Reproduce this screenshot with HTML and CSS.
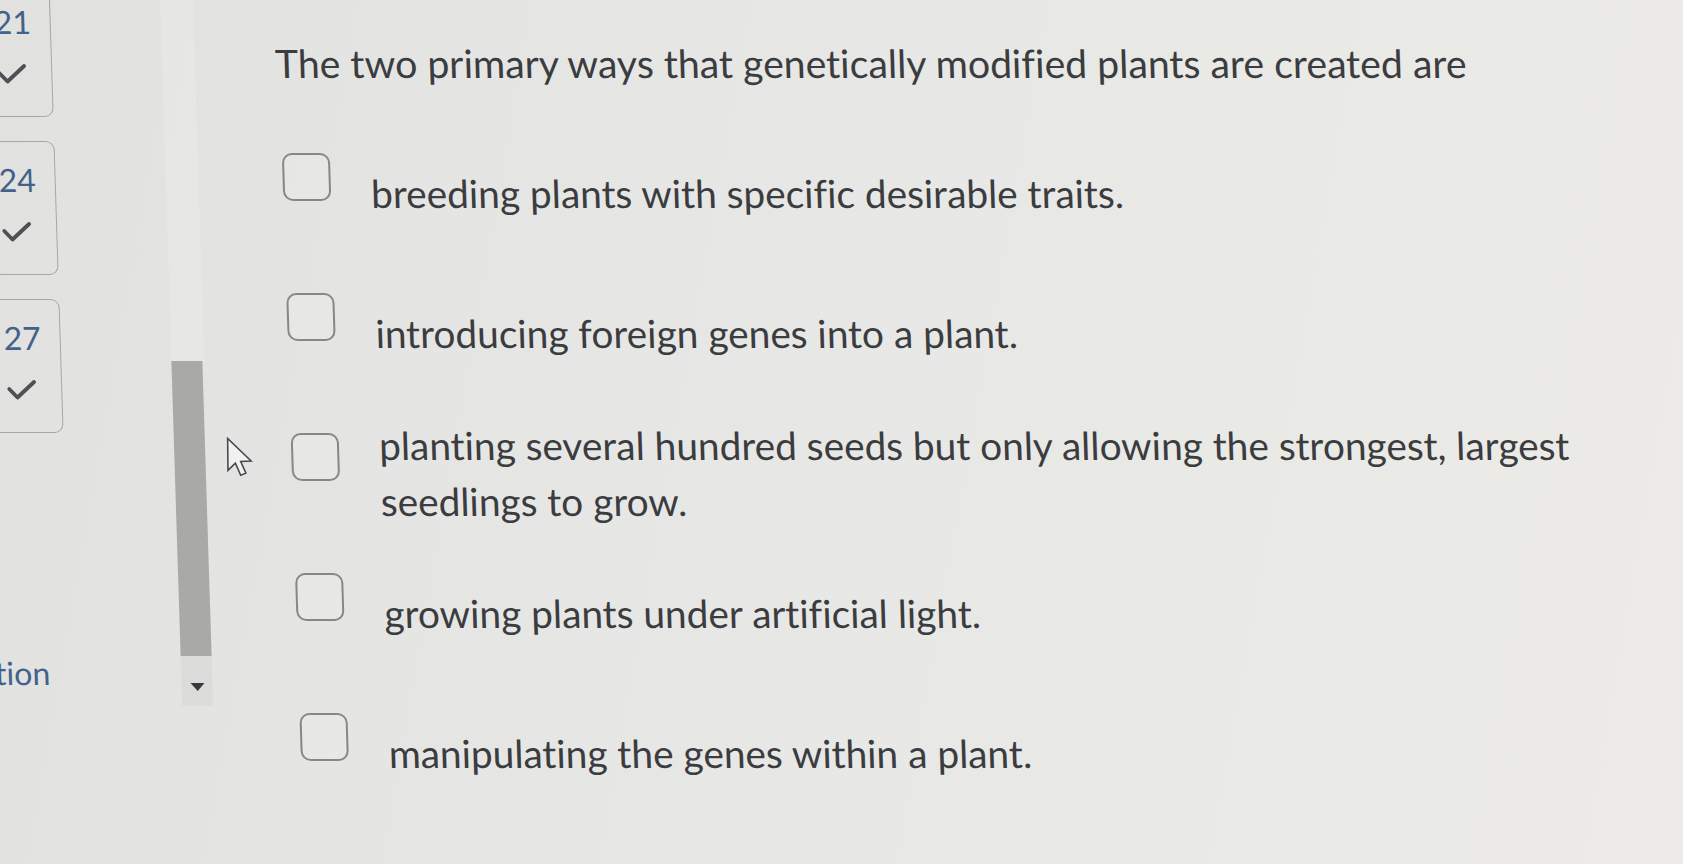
FILE: index.html
```html
<!DOCTYPE html>
<html lang="en">
<head>
<meta charset="utf-8">
<title>Quiz question</title>
<link rel="stylesheet" href="styles.css">
</head>
<body>
<div class="screen">
  <aside class="sidebar">
    <div class="nav-tile">
      <span class="nav-num">21</span>
      <svg class="nav-check" viewBox="0 0 29 20"><polyline points="2,9 10,17.5 27,2"/></svg>
    </div>
    <div class="nav-tile">
      <span class="nav-num">24</span>
      <svg class="nav-check" viewBox="0 0 29 20"><polyline points="2,9 10,17.5 27,2"/></svg>
    </div>
    <div class="nav-tile">
      <span class="nav-num">27</span>
      <svg class="nav-check" viewBox="0 0 29 20"><polyline points="2,9 10,17.5 27,2"/></svg>
    </div>
    <a class="nav-link">Question</a>
  </aside>

  <div class="scroll">
    <div class="scroll-track"></div>
    <div class="scroll-thumb"></div>
    <div class="scroll-btn"><span class="scroll-arrow"></span></div>
  </div>

  <main class="quiz">
    <p class="question">The two primary ways that genetically modified plants are created are</p>
    <ul class="answers">
      <li class="answer"><span class="answer-box"></span><span class="answer-text">breeding plants with specific desirable traits.</span></li>
      <li class="answer"><span class="answer-box"></span><span class="answer-text">introducing foreign genes into a plant.</span></li>
      <li class="answer"><span class="answer-box"></span><span class="answer-text">planting several hundred seeds but only allowing the strongest, largest seedlings to grow.</span></li>
      <li class="answer"><span class="answer-box"></span><span class="answer-text">growing plants under artificial light.</span></li>
      <li class="answer"><span class="answer-box"></span><span class="answer-text">manipulating the genes within a plant.</span></li>
    </ul>
  </main>
</div>

<svg class="cursor" viewBox="0 0 22 33">
  <path d="M1.2 1.2 L1.5 27.5 L7.6 21.6 L12 31.6 L16.3 29.8 L12 20.2 L20.6 19.8 Z"/>
</svg>
</body>
</html>
```

FILE: styles.css
```css
html, body {
  margin: 0;
  padding: 0;
}

body {
  width: 1683px;
  height: 864px;
  overflow: hidden;
  position: relative;
  font-family: Lato, "Noto Sans", sans-serif;
  font-variant-ligatures: none;
  color: #3b3c40;
  background: linear-gradient(100deg, #e1e2e0 0%, #e6e7e5 35%, #e9e9e6 70%, #ecebe8 100%);
}

.screen {
  display: flex;
  align-items: flex-start;
  height: 864px;
  transform: skewX(1.8deg);
  transform-origin: 0 0;
}

/* left question navigator */
.sidebar {
  flex: none;
  width: 110px;
  margin-left: -60px;
  margin-top: -17px;
  display: flex;
  flex-direction: column;
  gap: 24px;
}

.nav-tile {
  height: 134px;
  box-sizing: border-box;
  border: 1.5px solid #a7a7a6;
  border-radius: 9px;
  padding: 18px 0 0 52px;
}

.nav-num {
  display: block;
  font-size: 32px;
  line-height: 40px;
  color: #44618a;
}

.nav-check {
  display: block;
  width: 29px;
  height: 20px;
  margin: 22px 0 0 2px;
}

.nav-check polyline {
  fill: none;
  stroke: #4f5053;
  stroke-width: 3.8;
  stroke-linecap: round;
  stroke-linejoin: round;
}

.nav-link {
  align-self: flex-end;
  display: block;
  margin-top: 196px;
  margin-right: 21px;
  font-size: 32px;
  line-height: 40px;
  color: #44618a;
  white-space: nowrap;
}

/* scrollbar */
.scroll {
  flex: none;
  width: 33px;
  margin-left: 110px;
  display: flex;
  flex-direction: column;
}

.scroll-track {
  height: 361px;
  background: rgba(255, 255, 255, 0.14);
}

.scroll-thumb {
  width: 31px;
  height: 295px;
  background: #a9a9a8;
}

.scroll-btn {
  width: 31px;
  height: 50px;
  background: #dcdddb;
  display: flex;
  justify-content: center;
  align-items: center;
}

.scroll-arrow {
  width: 0;
  height: 0;
  margin-top: 12px;
  border-left: 7px solid transparent;
  border-right: 7px solid transparent;
  border-top: 8px solid #3a3a3d;
}

/* question */
.quiz {
  flex: 1;
  margin-left: 80px;
  padding: 35px 40px 0 0;
}

.question {
  margin: 0;
  font-size: 39.2px;
  line-height: 56px;
  white-space: nowrap;
}

.answers {
  list-style: none;
  margin: 62px 0 0;
  padding: 0 0 0 4px;
  display: flex;
  flex-direction: column;
  gap: 60px;
}

.answer {
  display: flex;
  align-items: center;
  gap: 40px;
  height: 80px;
}

.answer-box {
  flex: none;
  align-self: flex-start;
  width: 48px;
  height: 48px;
  box-sizing: border-box;
  border: 2px solid #878786;
  border-radius: 10px;
  background: rgba(255, 255, 255, 0.12);
}

.answer-text {
  font-size: 38.8px;
  line-height: 56px;
}

/* mouse pointer overlay */
.cursor {
  position: absolute;
  left: 226px;
  top: 437px;
  width: 27px;
  height: 40px;
}

.cursor path {
  fill: #f1f1ef;
  stroke: #47484b;
  stroke-width: 1.3;
  stroke-linejoin: miter;
}
```
